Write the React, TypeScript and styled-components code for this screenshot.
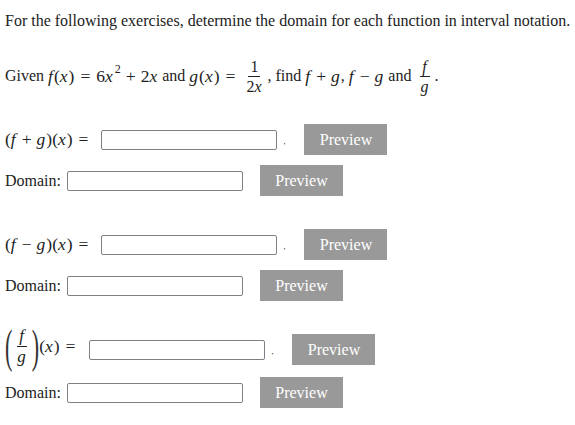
import styled, { createGlobalStyle } from "styled-components";

const Global = createGlobalStyle`
  html, body {
    margin: 0;
    padding: 0;
    background: #fff;
  }
  body {
    font-family: "Liberation Serif", "Times New Roman", serif;
    font-size: 16px;
    color: #222;
  }
`;

const Page = styled.div`
  width: 575px;
  height: 425px;
  padding: 0 0 0 5px;
  box-sizing: border-box;
  display: flex;
  flex-direction: column;
  overflow: hidden;
`;

const Title = styled.p`
  margin: 12px 0 0;
  line-height: 18px;
  white-space: nowrap;
`;

const Given = styled.p`
  margin: 26px 0 0;
  height: 40px;
  display: flex;
  align-items: center;
  white-space: pre;
`;

const MathText = styled.span`
  font-family: "Liberation Serif", "Times New Roman", serif;
  font-size: 17.5px;
  display: inline-flex;
  align-items: center;
  white-space: nowrap;
`;

const V = styled.span`
  font-style: italic;
  padding-right: 1px;
`;

const Op = styled.span<{ $rel?: boolean }>`
  margin: 0 ${(p) => (p.$rel ? "6px" : "5px")};
`;

const Sup = styled.span`
  font-size: 12px;
  line-height: 0;
  position: relative;
  top: -7px;
  margin-left: 1px;
`;

const Frac = styled.span<{ $size?: number }>`
  display: inline-flex;
  flex-direction: column;
  align-items: center;
  margin: 0 3px;
  font-size: ${(p) => p.$size ?? 16}px;
  line-height: ${(p) => (p.$size ?? 16) + 1}px;
`;

const Num = styled.span`
  padding: 0 2px 1px;
  border-bottom: 1px solid #222;
`;

const Den = styled.span`
  padding: 1px 2px 0;
`;

const Row = styled.div<{ $top: number }>`
  margin-top: ${(p) => p.$top}px;
  height: 31px;
  display: flex;
  align-items: center;
  flex-shrink: 0;
`;

const Label = styled.span<{ $gap?: number }>`
  margin-right: ${(p) => p.$gap ?? 6}px;
`;

const BigLabel = styled(MathText)`
  margin: -11px 8px -5px 0;
  height: 46px;
`;

const Paren = styled.span`
  display: inline-block;
  font-size: 22px;
  transform: scaleY(2.1);
  color: #333;
`;

const Field = styled.input`
  width: 176px;
  height: 20px;
  box-sizing: border-box;
  border: 1px solid #808080;
  border-radius: 2px;
  padding: 0 3px;
  font: inherit;
  margin: 0;
`;

const Comma = styled.span`
  margin: 4px 19px 0 6px;
  font-size: 8px;
`;

const PreviewButton = styled.button`
  height: 31px;
  width: 83px;
  border: none;
  background: #999;
  color: #fff;
  font-family: "Liberation Serif", "Times New Roman", serif;
  font-size: 16px;
  padding: 0;
  margin: 0;
`;

const DomainButton = styled(PreviewButton)`
  margin-left: 17px;
`;

function Domain({ top }: { top: number }) {
  return (
    <Row $top={top}>
      <Label>Domain:</Label>
      <Field />
      <DomainButton>Preview</DomainButton>
    </Row>
  );
}

function App() {
  return (
    <Page>
      <Global />
      <Title>
        For the following exercises, determine the domain for each function in
        interval notation.
      </Title>
      <Given>
        {"Given "}
        <MathText>
          <V>f</V>(<V>x</V>)<Op $rel>=</Op>6<V>x</V>
          <Sup>2</Sup>
          <Op>+</Op>2<V>x</V>
        </MathText>
        {" and "}
        <MathText>
          <V>g</V>(<V>x</V>)<Op $rel>=</Op>
          <Frac $size={16}>
            <Num>1</Num>
            <Den>
              2<V>x</V>
            </Den>
          </Frac>
        </MathText>
        {", find "}
        <MathText>
          <V>f</V>
          <Op>+</Op>
          <V>g</V>
        </MathText>
        {", "}
        <MathText>
          <V>f</V>
          <Op>−</Op>
          <V>g</V>
        </MathText>
        {" and "}
        <MathText>
          <Frac $size={16}>
            <Num>
              <V>f</V>
            </Num>
            <Den>
              <V>g</V>
            </Den>
          </Frac>
        </MathText>
        {"."}
      </Given>

      <Row $top={28}>
        <Label $gap={7}>
          <MathText>
            (<V>f</V>
            <Op>+</Op>
            <V>g</V>)(<V>x</V>)<Op $rel>=</Op>
          </MathText>
        </Label>
        <Field />
        <Comma>,</Comma>
        <PreviewButton>Preview</PreviewButton>
      </Row>
      <Domain top={10} />

      <Row $top={33}>
        <Label $gap={7}>
          <MathText>
            (<V>f</V>
            <Op>−</Op>
            <V>g</V>)(<V>x</V>)<Op $rel>=</Op>
          </MathText>
        </Label>
        <Field />
        <Comma>,</Comma>
        <PreviewButton>Preview</PreviewButton>
      </Row>
      <Domain top={10} />

      <Row $top={33}>
        <BigLabel>
          <Paren>(</Paren>
          <Frac $size={17}>
            <Num>
              <V>f</V>
            </Num>
            <Den>
              <V>g</V>
            </Den>
          </Frac>
          <Paren>)</Paren>(<V>x</V>)<Op $rel>=</Op>
        </BigLabel>
        <Field />
        <Comma>,</Comma>
        <PreviewButton>Preview</PreviewButton>
      </Row>
      <Domain top={12} />
    </Page>
  );
}

export default App;
